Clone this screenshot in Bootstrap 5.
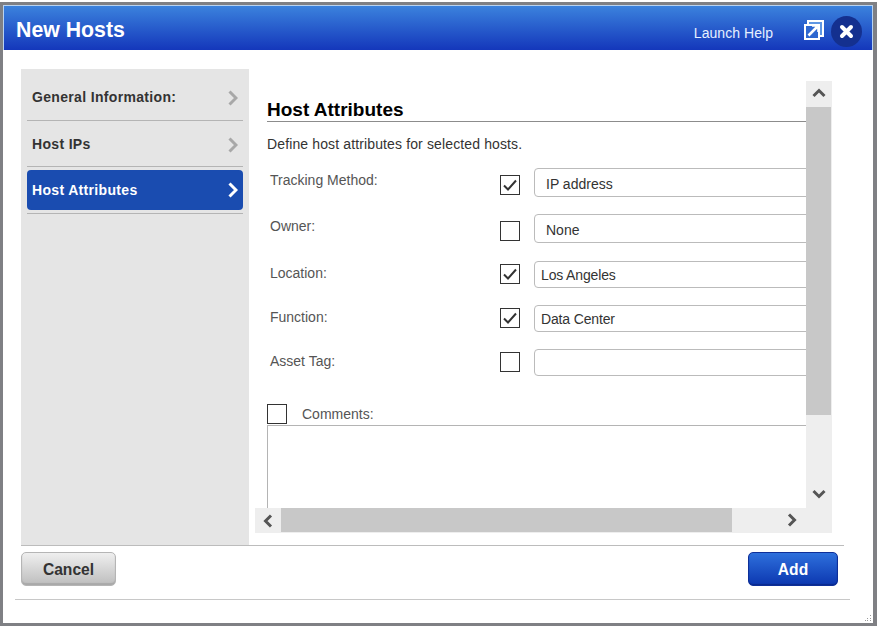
<!DOCTYPE html>
<html lang="en">
<head>
  <meta charset="UTF-8">
  <title>New Hosts</title>
  <meta name="viewport" content="width=device-width, initial-scale=1">
  <link href="https://cdn.jsdelivr.net/npm/bootstrap@5.3.0/dist/css/bootstrap.min.css" rel="stylesheet">
  <style>
    html, body { height: 100%; }
    body {
      background: #fff;
      font-family: "Liberation Sans", Arial, sans-serif;
      font-size: 14px;
      color: #333;
      overflow: hidden;
    }
    .win-frame {
      width: 877px;
      height: 624px;
      margin-top: 2px;
      border: solid #7f8084;
      border-width: 3px 4px 3px 3px;
      background: #fff;
      display: flex;
      flex-direction: column;
      position: relative;
    }
    .win-head {
      height: 45px;
      flex: none;
      border: 1px solid #b9d3f0;
      border-bottom: 0;
      background: linear-gradient(to bottom, #3b82dd, #1437bb);
      color: #fff;
      padding: 0 10px 0 12px;
    }
    .win-title { font-size: 21.3px; font-weight: 700; margin-top: 6px; }
    .help-link { font-size: 14px; letter-spacing: .05px; color: #e6f0ff; margin-right: 31px; margin-top: 10px; }
    .head-icon { margin-top: 4px; }
    .close-btn {
      width: 31px;
      height: 31px;
      border-radius: 50%;
      background: #14308f;
      margin-left: 7px;
      margin-top: 6px;
    }
    .win-main { height: 476px; margin: 19px 0 0 18px; flex: none; }
    .side-col {
      width: 228px;
      background: #e5e5e5;
      padding: 6px 6px 0;
      flex: none;
    }
    .side-item {
      height: 46px;
      border-bottom: 1px solid #b4b4b4;
      font-weight: 700;
      font-size: 14px;
      letter-spacing: .33px;
      padding: 0 5px;
      color: #333;
    }
    .side-item.side-low { padding-top: 2px; }
    .side-on-wrap { height: 47px; padding-top: 3px; border-bottom: 1px solid #b4b4b4; }
    .side-on {
      height: 40px;
      background: #1a4cb0;
      color: #fff;
      border-radius: 4px;
      border: 0;
    }
    .pane {
      width: 577px;
      height: 452px;
      margin: 12px 0 0 6px;
      flex: none;
      display: grid;
      grid-template-columns: 551px 26px;
      grid-template-rows: 427px 25px;
    }
    .pane-body { overflow: hidden; padding: 0 0 0 12px; }
    .pane-title {
      font-size: 19px;
      font-weight: 700;
      color: #000;
      margin: 17px 0 0;
      height: 24px;
      line-height: 23px;
      border-bottom: 1px solid #8c8c8c;
    }
    .pane-intro { margin: 13px 0 0; line-height: 18px; color: #333; letter-spacing: .13px; }
    .attr-row { display: flex; align-items: flex-start; color: #555; }
    .attr-row.gap-first { margin-top: 15px; }
    .attr-row.gap-next { margin-top: 17px; }
    .attr-row.gap-wide { margin-top: 18px; }
    .attr-label { width: 233px; padding-left: 3px; margin-top: 3px; flex: none; line-height: 18px; }
    .attr-check {
      width: 20px;
      height: 20px;
      border: 1px solid #333;
      background: #fff;
      flex: none;
      margin-right: 14px;
      line-height: 0;
    }
    .attr-row .attr-check { margin-top: 3px; }
    .attr-row .attr-check.drop { margin-top: 7px; }
    .attr-field {
      width: 290px;
      flex: none;
      border: 1px solid #bbb;
      border-radius: 4px;
      color: #333;
      padding: 0 6px;
      display: flex;
      align-items: center;
    }
    .attr-field.tall { height: 29px; padding: 4px 0 0 11px; }
    .attr-field.low { height: 27px; padding-top: 2px; letter-spacing: -.15px; }
    .note-line { border-bottom: 1px solid #b4b4b4; height: 22px; color: #555; margin-top: 28px; }
    .note-line .attr-check { margin-right: 15px; }
    .note-box { height: 90px; border-left: 1px solid #b4b4b4; }
    .bar-btn { background: #eee; flex: none; }
    .bar-v { background: #eee; display: flex; flex-direction: column; }
    .bar-v .bar-btn { height: 26px; padding-bottom: 2px; }
    .bar-v .bar-thumb { height: 308px; width: 25px; background: #c8c8c8; flex: none; }
    .bar-h { background: #eee; display: flex; }
    .bar-h .bar-btn { width: 26px; }
    .bar-h .bar-thumb { width: 451px; background: #c8c8c8; height: 24px; flex: none; }
    .bar-rest { padding: 5px 9px 0 0; }
    .bar-corner { background: #eee; }
    .win-foot { height: 54px; flex: none; margin: 0 29px 0 18px; border-top: 1px solid #bcbcbc; }
    .btn-cancel, .btn-add {
      height: 34px;
      font-size: 15.6px;
      font-weight: 700;
      padding: 2px 0 0;
      margin-top: 6px;
      border-radius: 5px;
    }
    .btn-cancel {
      width: 95px;
      color: #333;
      border: 1px solid #b5b5b5;
      background: linear-gradient(to bottom, #efefef, #bdbdbd);
      box-shadow: inset 0 -2px 1px #a9a9a9;
    }
    .btn-add {
      width: 90px;
      margin-right: 6px;
      color: #fff;
      border: 1px solid #0e2f99;
      background: linear-gradient(to bottom, #2e70dc, #0c37b0);
      box-shadow: inset 0 -1px 1px #0a2a8c;
    }
    .win-rule { border-top: 1px solid #c8c8c8; margin: 0 23px 0 12px; }
    .grip { position: absolute; right: 1px; bottom: 1px; }
  </style>
</head>
<body>
  <div class="win-frame">
    <div class="win-head d-flex align-items-center">
      <div class="win-title flex-grow-1">New Hosts</div>
      <div class="help-link">Launch Help</div>
      <svg class="head-icon" width="20" height="20" viewBox="0 0 20 20">
        <rect x="4" y="1" width="15" height="15" fill="#5f97e3" stroke="#fff" stroke-width="2"/>
        <rect x="1" y="5" width="14" height="14" fill="#2f68d0" stroke="#fff" stroke-width="2"/>
        <path d="M4.5 15.5 L13 7 M8 5.5 H14.5 V12" fill="none" stroke="#fff" stroke-width="2.6"/>
      </svg>
      <div class="close-btn d-flex align-items-center justify-content-center">
        <svg width="15" height="15" viewBox="0 0 15 15"><path d="M3 3 L12 12 M12 3 L3 12" stroke="#fff" stroke-width="4" stroke-linecap="round"/></svg>
      </div>
    </div>

    <div class="win-main d-flex">
      <div class="side-col">
        <div class="side-item d-flex align-items-center justify-content-between">
          <span>General Information:</span>
          <svg width="10" height="16" viewBox="0 0 10 16"><path d="M1.5 1.5 L8 8 L1.5 14.5" fill="none" stroke="#a8a8a8" stroke-width="3"/></svg>
        </div>
        <div class="side-item side-low d-flex align-items-center justify-content-between">
          <span>Host IPs</span>
          <svg width="10" height="16" viewBox="0 0 10 16"><path d="M1.5 1.5 L8 8 L1.5 14.5" fill="none" stroke="#a8a8a8" stroke-width="3"/></svg>
        </div>
        <div class="side-on-wrap">
          <div class="side-item side-on d-flex align-items-center justify-content-between">
            <span>Host Attributes</span>
            <svg width="10" height="16" viewBox="0 0 10 16"><path d="M1.5 1.5 L8 8 L1.5 14.5" fill="none" stroke="#fff" stroke-width="3"/></svg>
          </div>
        </div>
      </div>

      <div class="pane">
        <div class="pane-body">
          <div class="pane-title">Host Attributes</div>
          <p class="pane-intro">Define host attributes for selected hosts.</p>

          <div class="attr-row gap-first">
            <div class="attr-label">Tracking Method:</div>
            <div class="attr-check drop">
              <svg width="18" height="18" viewBox="0 0 18 18"><path d="M3 9.5 L7 13.5 L15 4.5" fill="none" stroke="#333" stroke-width="2"/></svg>
            </div>
            <div class="attr-field tall">IP address</div>
          </div>
          <div class="attr-row gap-next">
            <div class="attr-label">Owner:</div>
            <div class="attr-check drop"></div>
            <div class="attr-field tall">None</div>
          </div>
          <div class="attr-row gap-wide">
            <div class="attr-label">Location:</div>
            <div class="attr-check">
              <svg width="18" height="18" viewBox="0 0 18 18"><path d="M3 9.5 L7 13.5 L15 4.5" fill="none" stroke="#333" stroke-width="2"/></svg>
            </div>
            <div class="attr-field low">Los Angeles</div>
          </div>
          <div class="attr-row gap-next">
            <div class="attr-label">Function:</div>
            <div class="attr-check">
              <svg width="18" height="18" viewBox="0 0 18 18"><path d="M3 9.5 L7 13.5 L15 4.5" fill="none" stroke="#333" stroke-width="2"/></svg>
            </div>
            <div class="attr-field low">Data Center</div>
          </div>
          <div class="attr-row gap-next">
            <div class="attr-label">Asset Tag:</div>
            <div class="attr-check"></div>
            <div class="attr-field low"></div>
          </div>

          <div class="note-line d-flex align-items-start">
            <div class="attr-check"></div>
            <span>Comments:</span>
          </div>
          <div class="note-box"></div>
        </div>

        <div class="bar-v">
          <div class="bar-btn d-flex align-items-center justify-content-center">
            <svg width="14" height="10" viewBox="0 0 14 10"><path d="M1.5 8 L7 2.5 L12.5 8" fill="none" stroke="#555" stroke-width="3"/></svg>
          </div>
          <div class="bar-thumb"></div>
          <div class="flex-grow-1"></div>
          <div class="bar-btn d-flex align-items-center justify-content-center">
            <svg width="14" height="10" viewBox="0 0 14 10"><path d="M1.5 2 L7 7.5 L12.5 2" fill="none" stroke="#555" stroke-width="3"/></svg>
          </div>
        </div>
        <div class="bar-h">
          <div class="bar-btn d-flex align-items-center justify-content-center">
            <svg width="10" height="14" viewBox="0 0 10 14"><path d="M8 1.5 L2.5 7 L8 12.5" fill="none" stroke="#555" stroke-width="3"/></svg>
          </div>
          <div class="bar-thumb"></div>
          <div class="bar-rest flex-grow-1 d-flex justify-content-end align-items-start">
            <svg width="10" height="14" viewBox="0 0 10 14"><path d="M2 1.5 L7.5 7 L2 12.5" fill="none" stroke="#555" stroke-width="3"/></svg>
          </div>
        </div>
        <div class="bar-corner"></div>
      </div>
    </div>

    <div class="win-foot d-flex justify-content-between align-items-start">
      <button type="button" class="btn btn-cancel">Cancel</button>
      <button type="button" class="btn btn-add">Add</button>
    </div>
    <div class="win-rule"></div>
    <svg class="grip" width="8" height="8" viewBox="0 0 8 8"><path d="M6 1h1v1H6zM3 4h1v1H3zM6 4h1v1H6zM1 6h1v1H1zM3 6h1v1H3zM6 6h1v1H6z" fill="#999"/></svg>
  </div>
</body>
</html>
